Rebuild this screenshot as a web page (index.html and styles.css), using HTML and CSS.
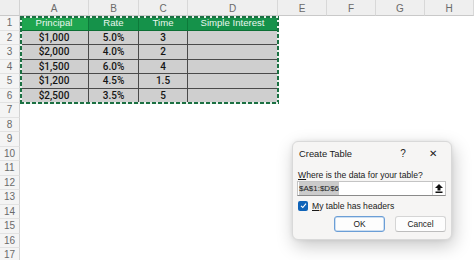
FILE: index.html
```html
<!DOCTYPE html>
<html>
<head>
<meta charset="utf-8">
<link rel="stylesheet" href="styles.css">
</head>
<body>
<div class="sheet">
  <div class="corner"></div>
  <div class="ch">A</div><div class="ch">B</div><div class="ch">C</div><div class="ch">D</div>
  <div class="ch">E</div><div class="ch">F</div><div class="ch">G</div><div class="ch">H</div>

  <div class="rh">1</div>
  <div class="hd active">Principal</div><div class="hd">Rate</div><div class="hd">Time</div><div class="hd">Simple Interest</div>
  <div class="rh">2</div>
  <div class="td">$1,000</div><div class="td">5.0%</div><div class="td">3</div><div class="td"></div>
  <div class="rh">3</div>
  <div class="td">$2,000</div><div class="td">4.0%</div><div class="td">2</div><div class="td"></div>
  <div class="rh">4</div>
  <div class="td">$1,500</div><div class="td">6.0%</div><div class="td">4</div><div class="td"></div>
  <div class="rh">5</div>
  <div class="td">$1,200</div><div class="td">4.5%</div><div class="td">1.5</div><div class="td"></div>
  <div class="rh">6</div>
  <div class="td">$2,500</div><div class="td">3.5%</div><div class="td">5</div><div class="td"></div>

  <div class="empty-right"></div>
  <div class="marquee"></div>

  <div class="rh">7</div><div class="rh">8</div><div class="rh">9</div><div class="rh">10</div>
  <div class="rh">11</div><div class="rh">12</div><div class="rh">13</div><div class="rh">14</div>
  <div class="rh">15</div><div class="rh">16</div><div class="rh">17</div>
  <div class="empty-bottom"></div>

  <div class="dialog">
    <div class="dlg-title">
      <span class="dlg-name">Create Table</span>
      <span class="dlg-btn">?</span>
      <span class="dlg-btn close">&#x2715;</span>
    </div>
    <div class="dlg-label"><u>W</u>here is the data for your table?</div>
    <div class="dlg-input">
      <span class="dlg-value"><span class="sel">$A$1:$D$6</span></span>
      <span class="collapse">
        <svg width="8" height="9" viewBox="0 0 8 9"><path d="M4 0 L8 4 H5.5 V6.5 H2.5 V4 H0 Z" fill="#111"/><rect x="0.5" y="7.5" width="7" height="1.5" fill="#111"/></svg>
      </span>
    </div>
    <div class="dlg-check">
      <span class="box"><svg width="9" height="9" viewBox="0 0 9 9"><path d="M2 4.8 L3.8 6.5 L7 2.6" fill="none" stroke="#fff" stroke-width="1.1"/></svg></span>
      <span><u>M</u>y table has headers</span>
    </div>
    <div class="dlg-buttons">
      <span class="btn ok">OK</span>
      <span class="btn">Cancel</span>
    </div>
  </div>
</div>
</body>
</html>
```

FILE: styles.css
```css
html, body {
  margin: 0;
  padding: 0;
  background: #ffffff;
}

.sheet {
  position: relative;
  width: 474px;
  height: 260px;
  overflow: hidden;
  display: grid;
  grid-template-columns: 20px 69px 50px 49px 90px 49px 49px 49px 49px;
  grid-template-rows: 16px repeat(17, 14.5px);
  font-family: "Liberation Sans", Arial, sans-serif;
}

.corner {
  background: #eeeeee;
  border-right: 1px solid #d2d2d2;
  border-bottom: 1px solid #c9c9c9;
  box-sizing: border-box;
}

.ch {
  background: #efefef;
  color: #6a6a6a;
  font-size: 10px;
  display: flex;
  align-items: center;
  justify-content: center;
  border-right: 1px solid #d8d8d8;
  border-bottom: 1px solid #c9c9c9;
  box-sizing: border-box;
  padding-top: 1px;
}

.rh {
  background: #f4f4f4;
  color: #6a6a6a;
  font-size: 10px;
  display: flex;
  align-items: center;
  justify-content: center;
  border-right: 1px solid #d2d2d2;
  border-bottom: 1px solid #e2e2e2;
  box-sizing: border-box;
}

.hd {
  background: #15924a;
  color: #eaf6ee;
  font-size: 9.6px;
  display: flex;
  align-items: center;
  justify-content: center;
  border-right: 1px solid #0d7a3a;
  border-bottom: 1px solid #0c6e34;
  box-sizing: border-box;
}

.hd.active {
  background: #1ea54f;
}

.td {
  background: #cfcfcf;
  color: #151515;
  font-size: 10px;
  font-family: Roboto, "Liberation Sans", sans-serif;
  font-weight: 500;
  display: flex;
  align-items: center;
  justify-content: center;
  border-right: 1px solid #4a4a4a;
  border-bottom: 1px solid #4a4a4a;
  box-sizing: border-box;
}

.empty-right {
  grid-column: 6 / 10;
  grid-row: 2 / 8;
  background: #ffffff;
}

.empty-bottom {
  grid-column: 2 / 10;
  grid-row: 8 / 19;
  background: #ffffff;
}

.marquee {
  position: absolute;
  grid-column: 2 / 6;
  grid-row: 2 / 8;
  top: 0;
  left: 0;
  right: -1px;
  bottom: -1px;
  pointer-events: none;
  background:
    repeating-linear-gradient(90deg, #1b7042 0 4px, #e8f2ec 4px 6px) top / 100% 2px no-repeat,
    repeating-linear-gradient(90deg, #1b7042 0 4px, #e8f2ec 4px 6px) bottom / 100% 2px no-repeat,
    repeating-linear-gradient(180deg, #1b7042 0 4px, #e8f2ec 4px 6px) left / 2px 100% no-repeat,
    repeating-linear-gradient(180deg, #1b7042 0 4px, #e8f2ec 4px 6px) right / 2px 100% no-repeat;
}

/* Dialog */
.dialog {
  position: absolute;
  left: 292px;
  top: 141px;
  width: 160px;
  height: 99px;
  box-sizing: border-box;
  background: #f6f5f4;
  border: 1px solid #d9d9d9;
  border-radius: 6px;
  box-shadow: 2px 6px 18px rgba(0, 0, 0, 0.22), 0 0 4px rgba(0, 0, 0, 0.08);
  font-family: "Liberation Sans", Arial, sans-serif;
  font-size: 8.6px;
  color: #1a1a1a;
  display: flex;
  flex-direction: column;
  padding: 0 4px 0 4px;
}

.dlg-title {
  height: 23px;
  display: flex;
  align-items: center;
}

.dlg-name {
  flex: 1;
  padding-left: 2px;
  font-size: 9.4px;
}

.dlg-btn {
  width: 30px;
  text-align: center;
  font-size: 10px;
  color: #222;
}

.dlg-btn.close {
  font-size: 10px;
  margin-right: -1px;
}

.dlg-label {
  margin-top: 4px;
  height: 12px;
  line-height: 12px;
  padding-left: 1px;
}

.dlg-input {
  height: 15px;
  box-sizing: border-box;
  background: #ffffff;
  border: 1px solid #c4c4c4;
  border-bottom-color: #8a8a8a;
  display: flex;
  align-items: stretch;
  margin-right: 1px;
}

.dlg-value {
  flex: 1;
  display: flex;
  align-items: center;
  padding-left: 1px;
  font-size: 8px;
}

.sel {
  background: #cbcbcb;
  color: #202020;
  padding: 1px 0;
  line-height: 11px;
}

.collapse {
  width: 12px;
  border-left: 1px solid #d0d0d0;
  display: flex;
  align-items: center;
  justify-content: center;
}

.dlg-check {
  margin-top: 4px;
  height: 11px;
  display: flex;
  align-items: center;
  gap: 4px;
  padding-left: 1px;
}

.box {
  width: 10px;
  height: 10px;
  border-radius: 2px;
  background: #0f63b8;
  display: flex;
  align-items: center;
  justify-content: center;
}

.dlg-buttons {
  margin-top: 5px;
  display: flex;
  justify-content: flex-end;
  gap: 10px;
  margin-right: 1px;
}

.btn {
  width: 51px;
  height: 16px;
  box-sizing: border-box;
  background: #fdfdfd;
  border: 1px solid #d5d5d5;
  border-bottom-color: #bdbdbd;
  border-radius: 3px;
  display: flex;
  align-items: center;
  justify-content: center;
  font-size: 8.4px;
}

.btn.ok {
  border: 1px solid #6b9ed6;
  box-shadow: inset 0 0 0 0.5px #9cc0e6;
}
```
